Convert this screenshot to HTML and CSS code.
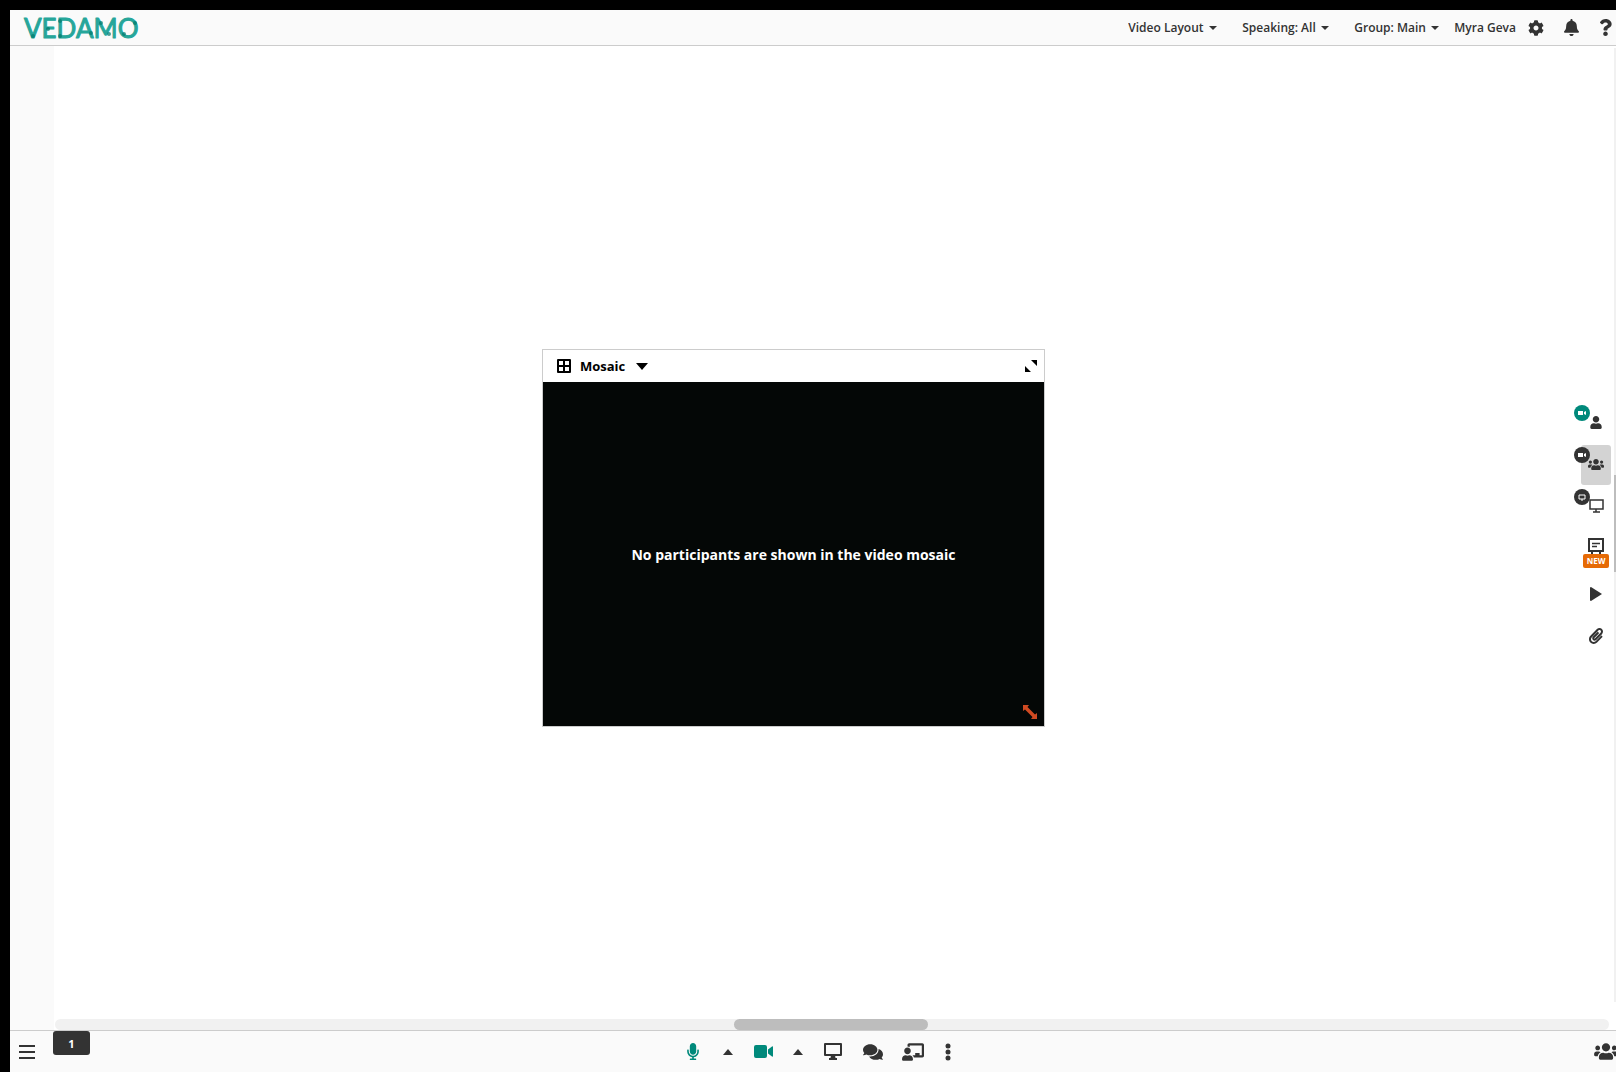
FILE: index.html
```html
<!DOCTYPE html>
<html lang="en">
<head>
  <meta charset="utf-8">
  <title>Vedamo</title>
  <link rel="stylesheet" href="styles.css">
</head>
<body>
  <div class="app">
    <header class="topbar">
      <a class="logo" href="#">
        <svg width="122" height="34" viewBox="0 0 122 34">
          <text x="1" y="27">VEDAMO</text>
          <g class="logo-dots"><circle cx="10" cy="25" r="2"/><circle cx="25" cy="18" r="2"/><circle cx="37" cy="10" r="2"/><circle cx="37" cy="25" r="2"/><circle cx="68" cy="22" r="2"/><circle cx="78" cy="12" r="2"/><circle cx="86" cy="23" r="2"/><circle cx="112" cy="12" r="2"/><circle cx="101" cy="23" r="2"/></g>
        </svg>
      </a>
      <nav class="top-menu">
        <label class="dropdown"><select aria-label="Video layout"><option>Video Layout</option></select></label>
        <label class="dropdown"><select aria-label="Speaking"><option>Speaking: All</option></select></label>
        <label class="dropdown"><select aria-label="Group"><option>Group: Main</option></select></label>
      </nav>
      <span class="user-name">Myra Geva</span>
      <div class="top-icons">
        <button aria-label="Settings">
          <svg width="16" height="16" viewBox="0 0 512 512"><path d="M487.4 315.7l-42.600-24.600c4.300-23.200 4.300-47 0-70.200l42.600-24.600c4.900-2.800 7.100-8.600 5.500-14-11.100-35.600-30-67.800-54.700-94.600-3.800-4.100-10-5.100-14.800-2.300L380.800 110c-17.900-15.400-38.500-27.300-60.800-35.100V25.800c0-5.600-3.900-10.500-9.400-11.700-36.700-8.200-74.300-7.800-109.200 0-5.500 1.200-9.400 6.100-9.400 11.700V75c-22.200 7.900-42.800 19.800-60.800 35.100L88.700 85.500c-4.900-2.800-11-1.900-14.800 2.300-24.700 26.700-43.600 58.900-54.700 94.600-1.700 5.400.6 11.200 5.500 14L67.300 221c-4.300 23.200-4.300 47 0 70.200l-42.600 24.600c-4.900 2.800-7.100 8.600-5.500 14 11.100 35.600 30 67.800 54.700 94.600 3.800 4.100 10 5.100 14.800 2.300l42.600-24.600c17.900 15.400 38.500 27.300 60.800 35.100v49.200c0 5.600 3.900 10.500 9.400 11.700 36.700 8.200 74.300 7.800 109.200 0 5.500-1.200 9.400-6.100 9.400-11.700v-49.200c22.200-7.900 42.800-19.800 60.800-35.100l42.600 24.600c4.900 2.800 11 1.900 14.800-2.300 24.700-26.700 43.600-58.900 54.700-94.600 1.500-5.500-.7-11.300-5.600-14.100zM256 336c-44.100 0-80-35.900-80-80s35.900-80 80-80 80 35.900 80 80-35.900 80-80 80z"/></svg>
        </button>
        <button aria-label="Notifications">
          <svg width="15" height="17" viewBox="0 0 448 512"><path d="M224 512c35.320 0 63.970-28.650 63.970-64H160.030c0 35.350 28.650 64 63.970 64zm215.390-149.710c-19.320-20.760-55.470-51.990-55.470-154.290 0-77.700-54.480-139.900-127.940-155.160V32c0-17.670-14.320-32-31.980-32s-31.980 14.330-31.980 32v20.840C118.560 68.100 64.080 130.300 64.080 208c0 102.300-36.150 133.530-55.470 154.290-6 6.450-8.660 14.160-8.610 21.710.11 16.400 12.980 32 32.100 32h383.800c19.120 0 32-15.600 32.100-32 .05-7.550-2.610-15.270-8.610-21.710z"/></svg>
        </button>
        <button aria-label="Help">
          <svg width="13" height="17" viewBox="0 0 384 512"><path d="M202.021 0C122.202 0 70.503 32.703 29.914 91.026c-7.363 10.580-5.093 25.086 5.178 32.874l43.138 32.709c10.373 7.865 25.132 6.026 33.253-4.148 25.049-31.381 43.630-49.449 82.757-49.449 30.764 0 68.816 19.799 68.816 49.631 0 22.552-18.617 34.134-48.993 51.164-35.423 19.860-82.299 44.576-82.299 106.405V320c0 13.255 10.745 24 24 24h72.471c13.255 0 24-10.745 24-24v-5.773c0-42.860 125.268-44.645 125.268-160.627C377.504 66.256 286.902 0 202.021 0zM192 373.459c-38.196 0-69.271 31.075-69.271 69.271 0 38.195 31.075 69.270 69.271 69.270s69.271-31.075 69.271-69.271-31.075-69.270-69.271-69.270z"/></svg>
        </button>
      </div>
    </header>

    <main class="workspace">
      <aside class="rail"></aside>
      <div class="stage">
        <section class="mosaic">
          <div class="mosaic-head">
            <svg width="14" height="14" viewBox="0 0 14 14"><path d="M1 1h12v12H1zM7 1v12M1 7h12" fill="none" stroke="#000" stroke-width="2" stroke-linejoin="round"/></svg>
            <label class="mosaic-select"><select aria-label="View"><option>Mosaic</option></select></label>
            <button class="expand" aria-label="Expand">
              <svg width="12" height="12" viewBox="0 0 12 12"><path d="M6 0h6v6zM0 6l6 6H0z"/></svg>
            </button>
          </div>
          <div class="mosaic-body">
            <p>No participants are shown in the video mosaic</p>
            <svg class="resize" width="14" height="14" viewBox="0 0 14 14"><path d="M0 0h6L4.500 2l7.500 7.500L14 8v6H8l1.500-2L2 4.500 0 6z"/></svg>
          </div>
        </section>

        <div class="tools">
          <button aria-label="My video">
            <span class="status on"><svg width="8" height="6" viewBox="0 0 8 6"><path d="M0 1h5v4H0zM6 2l2-1v4L6 4z"/></svg></span>
            <svg width="12" height="13" viewBox="0 0 448 512"><path d="M224 256c70.700 0 128-57.300 128-128S294.700 0 224 0 96 57.300 96 128s57.300 128 128 128zm89.600 32h-16.700c-22.200 10.200-46.900 16-72.900 16s-50.600-5.800-72.900-16h-16.700C60.200 288 0 348.200 0 422.400V464c0 26.500 21.500 48 48 48h352c26.500 0 48-21.500 48-48v-41.600c0-74.200-60.200-134.400-134.400-134.400z"/></svg>
          </button>
          <button class="active" aria-label="Video mosaic">
            <span class="status"><svg width="8" height="6" viewBox="0 0 8 6"><path d="M0 1h5v4H0zM6 2l2-1v4L6 4z"/></svg></span>
            <svg width="16" height="13" viewBox="0 0 640 512"><path d="M96 224c35.300 0 64-28.700 64-64s-28.700-64-64-64-64 28.700-64 64 28.700 64 64 64zm448 0c35.300 0 64-28.700 64-64s-28.700-64-64-64-64 28.700-64 64 28.700 64 64 64zm32 32h-64c-17.600 0-33.500 7.100-45.100 18.600 40.300 22.100 68.900 62 75.100 109.400h66c17.700 0 32-14.300 32-32v-32c0-35.300-28.700-64-64-64zm-256 0c61.900 0 112-50.100 112-112S381.900 32 320 32 208 82.100 208 144s50.100 112 112 112zm76.800 32h-8.300c-20.800 10-43.900 16-68.500 16s-47.600-6-68.500-16h-8.300C179.600 288 128 339.600 128 403.200V432c0 26.500 21.500 48 48 48h288c26.500 0 48-21.500 48-48v-28.800c0-63.600-51.600-115.200-115.200-115.200zm-223.700-13.400C161.500 263.100 145.600 256 128 256H64c-35.300 0-64 28.700-64 64v32c0 17.700 14.300 32 32 32h65.900c6.300-47.400 34.900-87.300 75.200-109.400z"/></svg>
          </button>
          <button aria-label="Screen sharing">
            <span class="status"><svg width="8" height="7" viewBox="0 0 8 7"><path d="M1 1h6v4H1zM3 6h2" fill="none" stroke="#fff"/></svg></span>
            <svg width="15" height="14" viewBox="0 0 15 14"><path d="M1 1h13v9H1zM7 10v3M4 13h7" fill="none" stroke="#333" stroke-width="1.500"/></svg>
          </button>
          <button class="board" aria-label="Whiteboard">
            <svg width="16" height="16" viewBox="0 0 16 16"><path d="M1 1h14v12H1zM4 13v3M12 13v3" fill="none" stroke="#333" stroke-width="2"/><path d="M4 5.500h8M4 8.500h5" stroke="#333" stroke-width="1.500"/></svg>
            <span class="new">NEW</span>
          </button>
          <button aria-label="Media player">
            <svg width="12" height="14" viewBox="0 0 12 14"><path d="M1 0l11 7L1 14q-1 0-1-1V1q0-1 1-1z"/></svg>
          </button>
          <button aria-label="Files">
            <svg width="14" height="16" viewBox="0 0 448 512"><path d="M43.246 466.142c-58.430-60.289-57.341-157.511 1.386-217.581L254.392 34c44.316-45.332 116.351-45.336 160.671 0 43.890 44.894 43.943 117.329 0 162.276L232.214 383.128c-29.855 30.537-78.633 30.111-107.982-.998-28.275-29.970-27.368-77.473 1.452-106.953l143.743-146.835c6.182-6.314 16.312-6.422 22.626-.241l22.861 22.379c6.315 6.182 6.422 16.312.241 22.626L171.427 319.927c-4.932 5.045-5.236 13.428-.648 18.292 4.372 4.634 11.245 4.711 15.688.165l182.849-186.851c19.613-20.062 19.613-52.725-.011-72.798-19.189-19.627-49.957-19.637-69.154 0L90.390 293.295c-34.763 35.560-35.299 93.120-1.191 128.313 34.010 35.093 88.985 35.137 123.058.286l172.060-175.999c6.177-6.319 16.307-6.433 22.626-.256l22.877 22.364c6.319 6.177 6.434 16.307.256 22.626l-172.060 175.998c-59.576 60.938-155.943 60.216-214.770-.485z"/></svg>
          </button>
        </div>
        <div class="scroll-x"><div class="thumb-x"></div></div>
        <div class="scroll-y"><div class="thumb-y"></div></div>
      </div>
    </main>

    <footer class="bottombar">
      <div class="bottom-left">
        <button class="menu" aria-label="Menu">
          <svg width="16" height="14" viewBox="0 0 16 14"><path d="M0 1h16M0 7h16M0 13h16" stroke="#333" stroke-width="2"/></svg>
        </button>
        <button class="page">1</button>
      </div>
      <div class="controls">
        <button aria-label="Microphone">
          <svg class="green" width="12" height="17" viewBox="0 0 352 512"><path d="M176 352c53.020 0 96-42.980 96-96V96c0-53.020-42.980-96-96-96S80 42.980 80 96v160c0 53.020 42.980 96 96 96zm160-160h-16c-8.840 0-16 7.160-16 16v48c0 74.800-64.490 134.820-140.790 127.380C96.710 376.890 48 317.110 48 250.300V208c0-8.840-7.160-16-16-16H16c-8.840 0-16 7.160-16 16v40.160c0 89.640 63.970 169.550 152 181.690V464H96c-8.840 0-16 7.160-16 16v16c0 8.840 7.160 16 16 16h160c8.840 0 16-7.160 16-16v-16c0-8.840-7.160-16-16-16h-56v-33.770C285.710 418.470 352 344.900 352 256v-48c0-8.840-7.160-16-16-16z"/></svg>
        </button>
        <button class="small" aria-label="Microphone options"><svg width="10" height="6" viewBox="0 0 10 6"><path d="M5 0l5 6H0z"/></svg></button>
        <button aria-label="Camera">
          <svg class="green" width="19" height="13" viewBox="0 0 19 13"><path d="M2 0h9q2 0 2 2v9q0 2-2 2H2q-2 0-2-2V2q0-2 2-2zM14 4.500l4-3q1-.5 1 .5v9q0 1-1 .5l-4-3z"/></svg>
        </button>
        <button class="small" aria-label="Camera options"><svg width="10" height="6" viewBox="0 0 10 6"><path d="M5 0l5 6H0z"/></svg></button>
        <button aria-label="Share screen">
          <svg width="18" height="17" viewBox="0 0 18 17"><path d="M1 1h16v11H1z" fill="none" stroke="#333" stroke-width="2" stroke-linejoin="round"/><path d="M7 12h4l.5 3H13v2H5v-2h1.500z"/></svg>
        </button>
        <button aria-label="Chat">
          <svg width="20" height="18" viewBox="0 0 576 512"><path d="M416 192c0-88.400-93.100-160-208-160S0 103.600 0 192c0 34.300 14.100 65.900 38 92-13.400 30.200-35.500 54.200-35.800 54.500-2.200 2.300-2.800 5.700-1.500 8.700S4.800 352 8 352c36.600 0 66.900-12.300 88.700-25 32.200 15.700 70.300 25 111.300 25 114.900 0 208-71.600 208-160zm122 220c23.900-26 38-57.700 38-92 0-66.900-53.500-124.200-129.300-148.100.9 6.600 1.300 13.300 1.300 20.100 0 105.900-107.700 192-240 192-10.800 0-21.300-.8-31.700-1.900C207.800 439.600 281.800 480 368 480c41 0 79.100-9.200 111.300-25 21.800 12.700 52.100 25 88.700 25 3.200 0 6.100-1.900 7.300-4.800 1.300-2.900.7-6.300-1.500-8.700-.3-.3-22.400-24.200-35.800-54.500z"/></svg>
        </button>
        <button aria-label="Classroom">
          <svg width="22" height="18" viewBox="0 0 640 512"><path d="M160 320c53 0 96-43 96-96s-43-96-96-96-96 43-96 96 43 96 96 96zm52 32c-34 18-70 18-104 0C49 352 0 396 0 464c0 26 21 48 48 48h224c27 0 48-22 48-48 0-68-49-112-108-112zM592 0H208c-26 0-48 22-48 50v48c24 0 46 7 64 18V64h352v288h-64v-64H384v64h-79c19 17 34 39 41 64h246c26 0 48-22 48-50V50c0-28-22-50-48-50z"/></svg>
        </button>
        <button class="small" aria-label="More">
          <svg width="6" height="18" viewBox="0 0 6 18"><circle cx="3" cy="3" r="2.500"/><circle cx="3" cy="9" r="2.500"/><circle cx="3" cy="15" r="2.500"/></svg>
        </button>
      </div>
      <button class="people" aria-label="Participants">
        <svg width="24" height="19" viewBox="0 0 640 512"><path d="M96 224c35.300 0 64-28.700 64-64s-28.700-64-64-64-64 28.700-64 64 28.700 64 64 64zm448 0c35.300 0 64-28.700 64-64s-28.700-64-64-64-64 28.700-64 64 28.700 64 64 64zm32 32h-64c-17.600 0-33.500 7.100-45.100 18.600 40.300 22.100 68.900 62 75.100 109.400h66c17.700 0 32-14.300 32-32v-32c0-35.300-28.700-64-64-64zm-256 0c61.900 0 112-50.100 112-112S381.900 32 320 32 208 82.100 208 144s50.100 112 112 112zm76.800 32h-8.300c-20.800 10-43.900 16-68.500 16s-47.600-6-68.500-16h-8.300C179.600 288 128 339.600 128 403.200V432c0 26.500 21.500 48 48 48h288c26.500 0 48-21.500 48-48v-28.800c0-63.600-51.600-115.200-115.200-115.200zm-223.700-13.400C161.500 263.100 145.600 256 128 256H64c-35.300 0-64 28.700-64 64v32c0 17.700 14.300 32 32 32h65.900c6.300-47.400 34.900-87.300 75.200-109.400z"/></svg>
      </button>
    </footer>
  </div>
</body>
</html>
```
FILE: styles.css
```css
* {
  box-sizing: border-box;
}

body {
  margin: 0;
  background: #000;
  color: #333;
  font-family: "Open Sans", "Noto Sans", sans-serif;
  font-size: 12px;
  overflow: hidden;
}

button,
select {
  appearance: none;
  margin: 0;
  padding: 0;
  border: 0;
  background: none;
  color: inherit;
  font: inherit;
  cursor: pointer;
}

button {
  display: flex;
  align-items: center;
  justify-content: center;
}

svg {
  display: block;
  fill: #333;
}

.app {
  display: flex;
  flex-direction: column;
  height: 100vh;
  padding: 10px 0 0 10px;
}

/* top bar */
.topbar {
  display: flex;
  align-items: center;
  height: 36px;
  padding: 0 4px 0 13px;
  background: #fafafa;
  border-bottom: 1px solid #ccc;
}

.logo {
  margin-right: auto;
}

.logo text {
  fill: #26a69a;
  stroke: #26a69a;
  stroke-width: 1px;
  stroke-linejoin: round;
  font-family: Lato, sans-serif;
  font-size: 26px;
}

.logo-dots {
  fill: #00796b;
  opacity: 0.7;
}

.top-menu {
  display: flex;
  gap: 25px;
  margin-right: 15px;
}

.dropdown,
.mosaic-select {
  display: flex;
  align-items: center;
  gap: 5px;
}

.dropdown,
.user-name {
  font-weight: 600;
}

.dropdown::after {
  content: "";
  border: 4px solid transparent;
  border-top: 4px solid #333;
  border-bottom: 0;
}

.top-icons {
  display: flex;
  gap: 20px;
  margin-left: 12px;
}

/* workspace */
.workspace {
  display: flex;
  flex: 1;
  min-height: 0;
}

.rail {
  width: 44px;
  background: #fafafa;
}

.stage {
  position: relative;
  flex: 1;
  background: #fff;
}

.mosaic {
  position: absolute;
  left: 488px;
  top: 303px;
  display: flex;
  flex-direction: column;
  width: 503px;
  height: 378px;
  border: 1px solid #ccc;
  background: #fff;
}

.mosaic-head {
  display: flex;
  align-items: center;
  height: 32px;
  padding: 0 7px 0 14px;
}

.mosaic-select {
  gap: 10px;
  margin-left: 9px;
  color: #000;
  font-size: 13px;
  font-weight: 700;
}

.mosaic-select::after {
  content: "";
  border: 6px solid transparent;
  border-top: 7px solid #000;
  border-bottom: 0;
}

.expand {
  margin-left: auto;
}

.expand svg {
  fill: #000;
}

.mosaic-body {
  position: relative;
  display: flex;
  flex: 1;
  align-items: center;
  justify-content: center;
  background: #040706;
  color: #fff;
  font-size: 14px;
  font-weight: 700;
}

.mosaic-body p {
  margin: 0;
}

.resize {
  position: absolute;
  right: 7px;
  bottom: 7px;
  fill: #d04a22;
}

.tools {
  position: absolute;
  right: 5px;
  top: 357px;
  display: flex;
  flex-direction: column;
  gap: 2px;
}

.tools button {
  position: relative;
  width: 30px;
  height: 40px;
  padding-bottom: 2px;
  border-radius: 3px;
}

.tools .active {
  background: #d3d3d3;
}

.tools .board {
  flex-direction: column;
  gap: 0;
  height: 44px;
  padding: 4px 0 0;
}

.status {
  position: absolute;
  left: -7px;
  top: 2px;
  display: flex;
  align-items: center;
  justify-content: center;
  width: 16px;
  height: 16px;
  border-radius: 50%;
  background: #333;
}

.status.on {
  background: #00897b;
}

.status svg {
  fill: #fff;
}

.new {
  padding: 0 4px;
  border-radius: 2px;
  background: #e66a05;
  color: #fff;
  font-size: 8px;
  font-weight: 700;
  line-height: 14px;
}

.scroll-x {
  position: absolute;
  left: 1px;
  right: 7px;
  bottom: 0;
  height: 11px;
  border-radius: 6px;
  background: #f1f1f1;
}

.thumb-x {
  width: 194px;
  height: 11px;
  margin-left: 679px;
  border-radius: 6px;
  background: #bdbdbd;
}

.scroll-y {
  position: absolute;
  right: 0;
  top: 2px;
  bottom: 28px;
  width: 2px;
  background: #f1f1f1;
}

.thumb-y {
  height: 97px;
  margin-top: 427px;
  background: #bdbdbd;
}

/* bottom bar */
.bottombar {
  display: grid;
  grid-template-columns: 1fr auto 1fr;
  height: 42px;
  padding-right: 2px;
  padding-left: 12px;
  background: #fafafa;
  border-top: 1px solid #ccc;
}

.bottom-left {
  display: flex;
  align-items: flex-start;
}

.menu {
  width: 16px;
  height: 41px;
  margin-left: -3px;
}

.page {
  width: 37px;
  height: 24px;
  margin-left: 18px;
  border-radius: 3px;
  background: #333;
  color: #fff;
  font-size: 11px;
  font-weight: 700;
}

.controls {
  display: flex;
}

.controls button {
  width: 40px;
}

.controls .small {
  width: 30px;
}

.green {
  fill: #00897b;
}

.people {
  justify-self: end;
  margin-right: -4px;
}
```
